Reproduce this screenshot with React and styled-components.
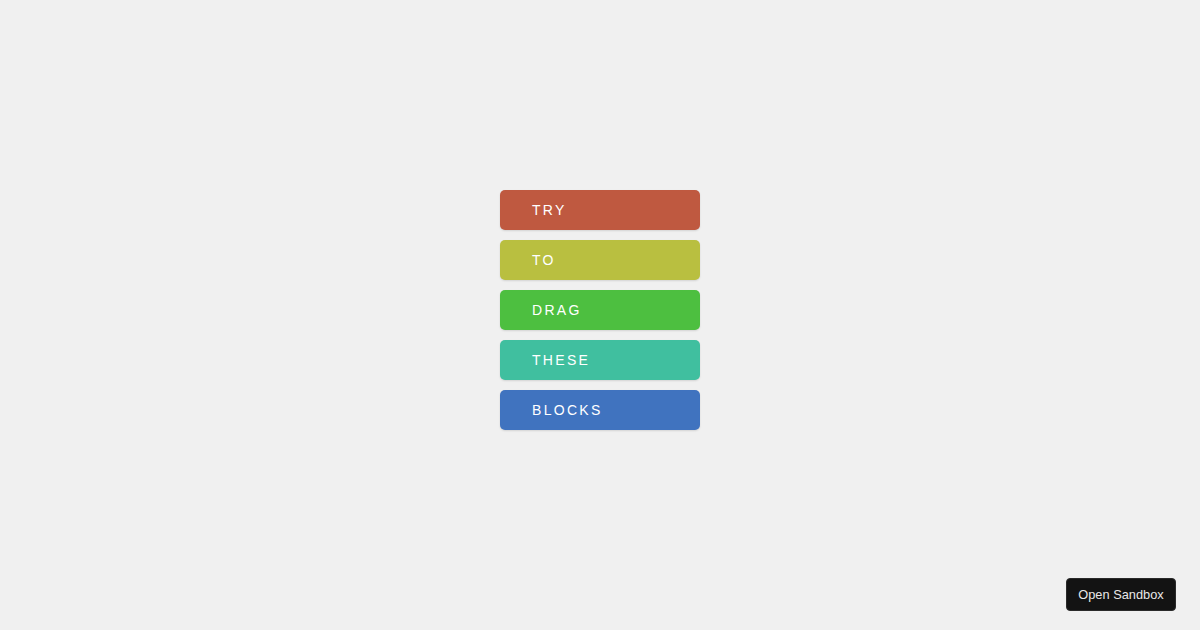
import styled, { createGlobalStyle } from 'styled-components'

const GlobalStyle = createGlobalStyle`
  html, body {
    margin: 0;
    padding: 0;
    background: #f0f0f0;
    font-family: "Liberation Sans", Arial, sans-serif;
  }
`

const words = ['TRY', 'TO', 'DRAG', 'THESE', 'BLOCKS']

const App = () => (
  <Page>
    <GlobalStyle />
    <List>
      {words.map((word, i) => (
        <Block key={word} $hue={12 + i * 51}>
          {word}
        </Block>
      ))}
    </List>
    <SandboxButton>Open Sandbox</SandboxButton>
  </Page>
)

export default App

const Page = styled.div`
  position: relative;
  height: 100vh;
  display: flex;
  align-items: center;
  justify-content: center;
`

const List = styled.div`
  display: flex;
  flex-direction: column;
  width: 200px;
`

const Block = styled.div`
  height: 40px;
  margin-bottom: 10px;
  box-sizing: border-box;
  display: flex;
  align-items: center;
  padding-left: 32px;
  border-radius: 5px;
  background: hsl(${(p) => p.$hue}, 50%, 50%);
  box-shadow: 0 1px 2px rgba(0, 0, 0, 0.12);
  color: #fff;
  font-size: 14px;
  letter-spacing: 2.3px;
  cursor: grab;
  user-select: none;
`

const SandboxButton = styled.button`
  position: absolute;
  right: 24px;
  bottom: 19px;
  width: 110px;
  height: 33px;
  padding: 0;
  border: 1px solid #2a2a2a;
  border-radius: 4px;
  background: #131313;
  color: #e8e8e8;
  font-family: "Liberation Sans", Arial, sans-serif;
  font-size: 12.8px;
  cursor: pointer;
`
